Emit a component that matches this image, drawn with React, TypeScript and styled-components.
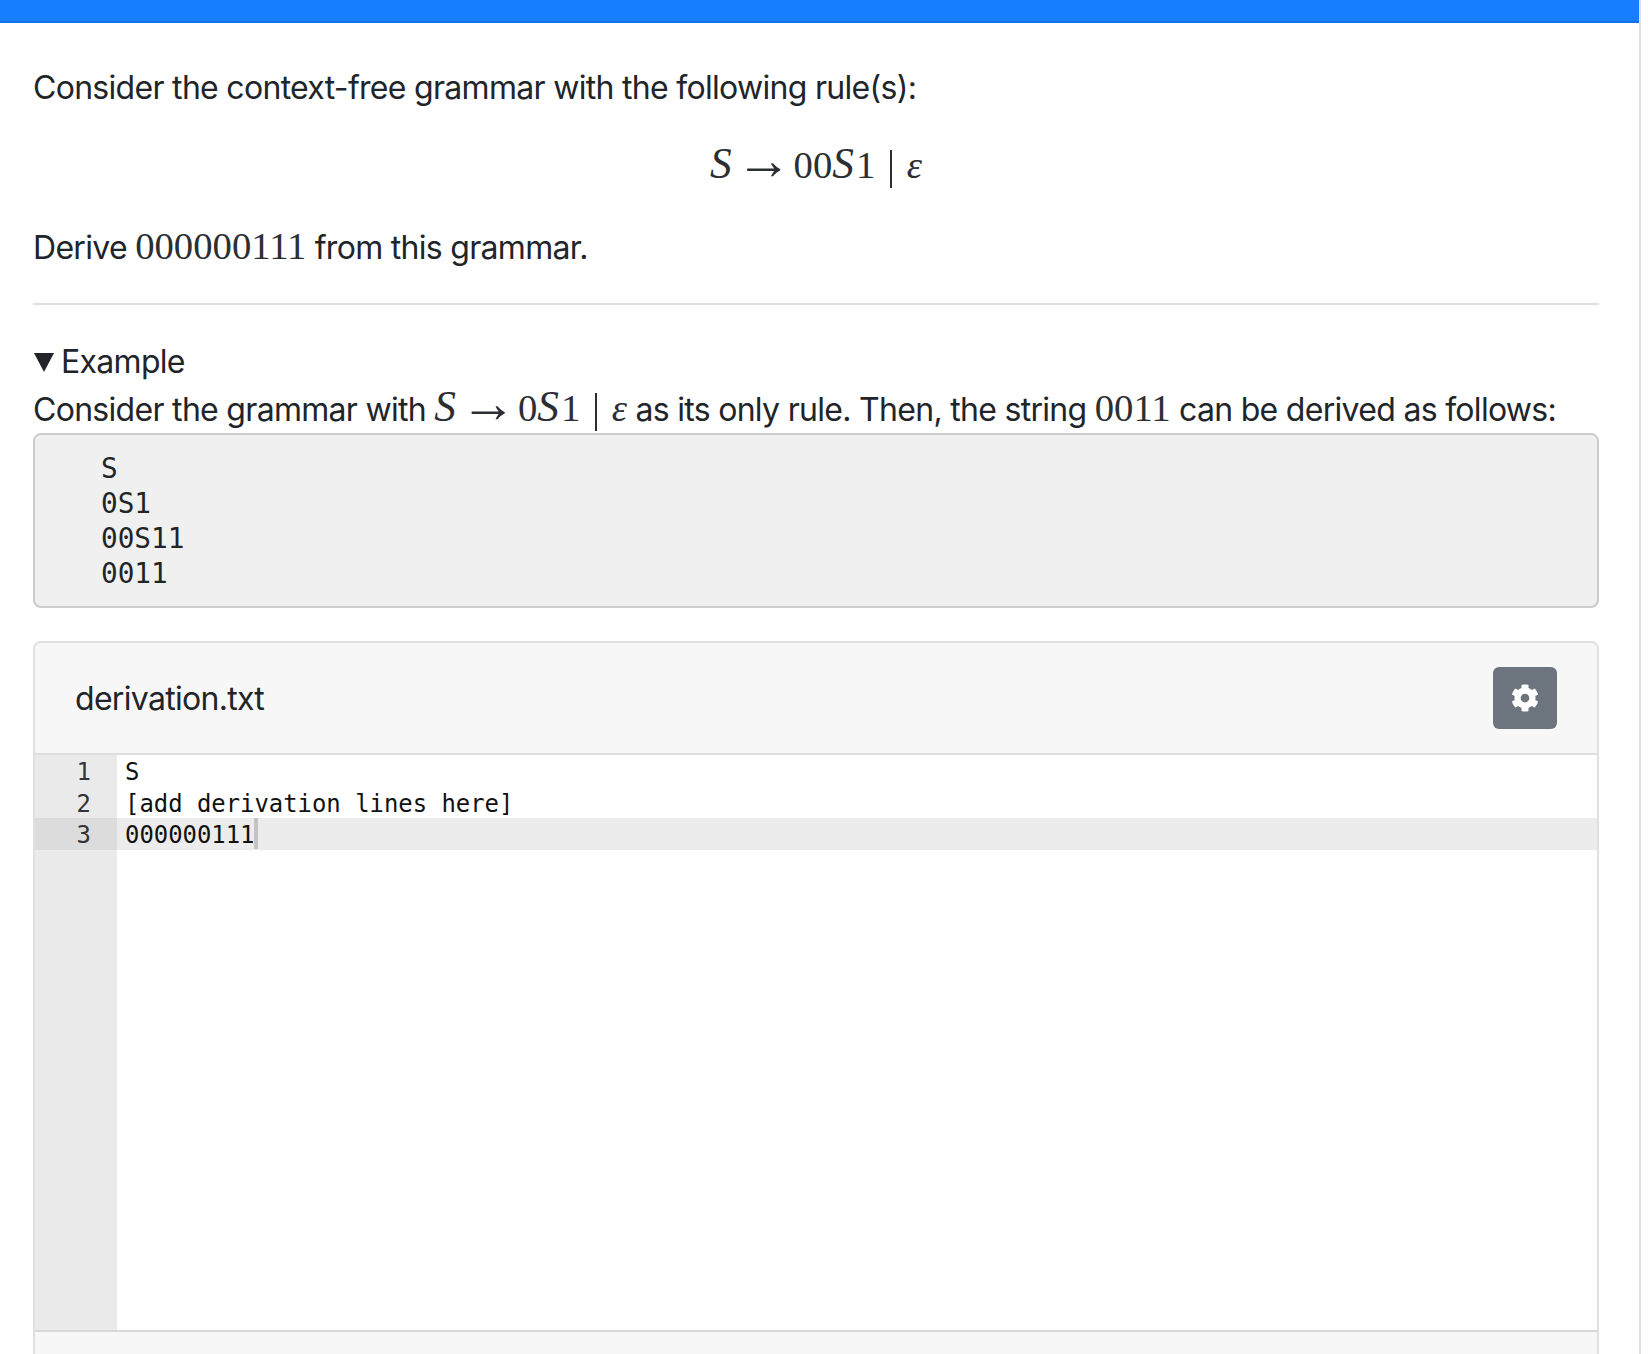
import * as React from 'react';
import styled, { createGlobalStyle } from 'styled-components';
import { FaCog } from 'react-icons/fa';

const GlobalStyle = createGlobalStyle`
  html, body {
    margin: 0;
    height: 1354px;
    overflow: hidden;
    background: #fff;
  }
  body {
    font-family: Inter, "Liberation Sans", sans-serif;
    font-size: 32px;
    line-height: 48px;
    letter-spacing: -0.7px;
    color: #212529;
  }
`;

const editorLines = ['S', '[add derivation lines here]', '000000111'];

const Math: React.FC<{ children: React.ReactNode }> = ({ children }) => (
  <MathText>{children}</MathText>
);

export default function App() {
  return (
    <Page>
      <GlobalStyle />
      <TopBar />
      <Content>
        <Paragraph>Consider the context-free grammar with the following rule(s):</Paragraph>
        <DisplayMath>
          <Math>
            <Var>S</Var>
            <Arrow>→</Arrow>
            00<Var>S</Var>1
            <Bar />
            <Epsilon>ε</Epsilon>
          </Math>
        </DisplayMath>
        <Paragraph>
          Derive <Math>000000111</Math> from this grammar.
        </Paragraph>
        <Rule />
        <Example open>
          <ExampleSummary>
            <Triangle />
            Example
          </ExampleSummary>
          <ExampleText>
            Consider the grammar with{' '}
            <Math>
              <Var>S</Var>
              <Arrow>→</Arrow>
              0<Var>S</Var>1
              <Bar />
              <Epsilon>ε</Epsilon>
            </Math>{' '}
            as its only rule. Then, the string <Math>0011</Math> can be derived as follows:
          </ExampleText>
          <Sample>{'S\n0S1\n00S11\n0011'}</Sample>
        </Example>
        <Card>
          <CardHeader>
            <FileName>derivation.txt</FileName>
            <SettingsButton aria-label="Settings">
              <FaCog size={28} />
            </SettingsButton>
          </CardHeader>
          <Editor>
            <Gutter>
              {editorLines.map((_, i) => (
                <LineNumber key={i} $active={i === editorLines.length - 1}>
                  {i + 1}
                </LineNumber>
              ))}
            </Gutter>
            <Lines>
              {editorLines.map((line, i) => (
                <CodeLine key={i} $active={i === editorLines.length - 1}>
                  {line}
                  {i === editorLines.length - 1 && <Cursor />}
                </CodeLine>
              ))}
            </Lines>
          </Editor>
          <CardFooter />
        </Card>
      </Content>
    </Page>
  );
}

const Page = styled.div`
  width: 1639px;
  height: 1354px;
  overflow: hidden;
  border-right: 2px solid #dedede;
`;

const TopBar = styled.div`
  height: 21px;
  background: #167fff;
  border-bottom: 2px solid #1070e4;
`;

const Content = styled.main`
  width: 1566px;
  padding: 41px 0 0 33px;
`;

const Paragraph = styled.p`
  margin: 0;
`;

const MathText = styled.span`
  font-family: "Liberation Serif", serif;
  font-size: 38.7px;
  line-height: 1;
  letter-spacing: 0;
  color: #2b2f33;
`;

const Var = styled.i`
  font-style: italic;
  font-size: 1.12em;
  line-height: 0;
  letter-spacing: 2px;
`;

const Epsilon = styled.i`
  font-style: italic;
`;

const Arrow = styled.span`
  display: inline-block;
  margin: 0 2px;
  font-size: 56px;
  line-height: 0;
  vertical-align: -1px;
`;

const Bar = styled.span`
  display: inline-block;
  width: 1.5px;
  height: 38px;
  margin: 0 15px 0 15px;
  vertical-align: -10px;
  background: #2b2f33;
`;

const DisplayMath = styled.div`
  margin: 31px 0 33px;
  text-align: center;
  line-height: 48px;
`;

const Rule = styled.hr`
  margin: 31px 0 33px;
  height: 2px;
  border: 0;
  background: #e0e0e0;
`;

const Example = styled.details``;

const ExampleSummary = styled.summary`
  display: flex;
  align-items: center;
  list-style: none;
`;

const Triangle = styled.span`
  width: 0;
  height: 0;
  margin: 1px 7px 0 1px;
  border-left: 10px solid transparent;
  border-right: 10px solid transparent;
  border-top: 19px solid #212529;
`;

const ExampleText = styled.div`
  height: 47px;
  white-space: nowrap;
`;

const Sample = styled.pre`
  box-sizing: border-box;
  height: 175px;
  margin: 0 0 33px;
  padding: 16px 66px;
  background: #f0f0f0;
  border: 2px solid #ccc;
  border-radius: 8px;
  font-family: "DejaVu Sans Mono", monospace;
  font-size: 27.7px;
  line-height: 35px;
  letter-spacing: 0;
`;

const Card = styled.section`
  border: 2px solid #e0e0e0;
  border-bottom: 0;
  border-radius: 8px 8px 0 0;
`;

const CardHeader = styled.header`
  box-sizing: border-box;
  display: flex;
  align-items: center;
  justify-content: space-between;
  height: 112px;
  padding: 0 40px;
  background: #f7f7f7;
  border-bottom: 2px solid #dedede;
  border-radius: 6px 6px 0 0;
`;

const FileName = styled.span`
  margin-top: 2px;
`;

const SettingsButton = styled.button`
  display: flex;
  align-items: center;
  justify-content: center;
  width: 64px;
  height: 62px;
  padding: 0;
  color: #fff;
  background: #6c757d;
  border: 0;
  border-radius: 6px;
`;

const Editor = styled.div`
  display: flex;
  height: 575px;
  font-family: "DejaVu Sans Mono", monospace;
  font-size: 23.9px;
  line-height: 34px;
  letter-spacing: 0;
`;

const Gutter = styled.div`
  flex: 0 0 82px;
  background: #eaeaea;
`;

const LineNumber = styled.div<{ $active?: boolean }>`
  height: 31.5px;
  padding-right: 26px;
  text-align: right;
  color: #333;
  background: ${(p) => (p.$active ? '#dcdcdc' : 'transparent')};
`;

const Lines = styled.div`
  flex: 1;
  min-width: 0;
`;

const CodeLine = styled.div<{ $active?: boolean }>`
  height: 31.5px;
  padding-left: 8px;
  white-space: pre;
  color: #111;
  background: ${(p) => (p.$active ? '#ececec' : 'transparent')};
`;

const Cursor = styled.span`
  display: inline-block;
  width: 4px;
  height: 31px;
  vertical-align: top;
  background: #c4c4c4;
`;

const CardFooter = styled.footer`
  height: 60px;
  background: #f7f7f7;
  border-top: 2px solid #d8d8d8;
`;
